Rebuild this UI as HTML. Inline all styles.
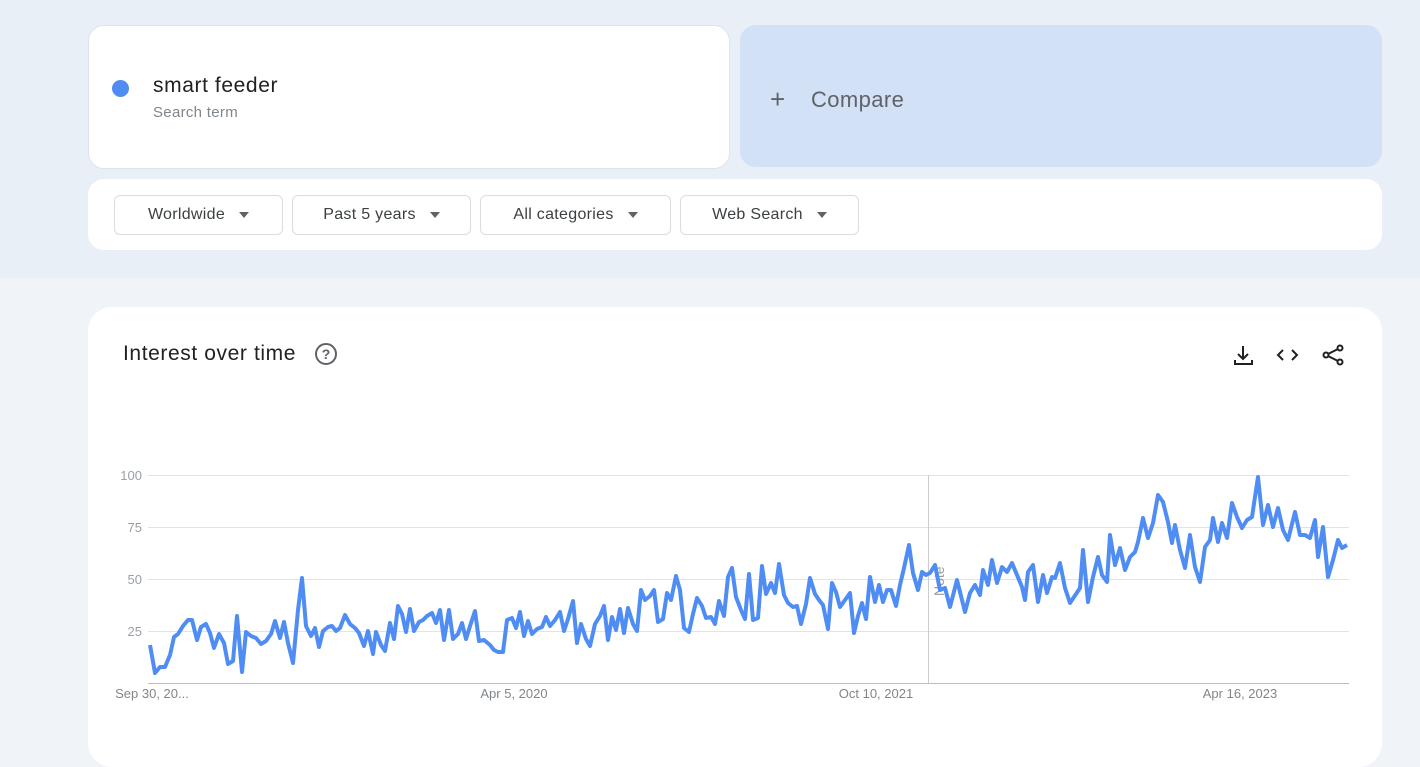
<!DOCTYPE html>
<html><head><meta charset="utf-8"><style>
body{margin:0;width:1420px;height:733px;overflow:hidden;background:#f0f4f9;font-family:"Liberation Sans",Arial,sans-serif;position:relative}
.band{position:absolute;left:0;top:0;width:1420px;height:278px;background:#e8eff7}
.card{position:absolute;background:#fff;border-radius:16px}
.btn{position:absolute;top:195px;height:40px;border:1px solid #dadce0;border-radius:6px;box-sizing:border-box;font-size:16px;letter-spacing:0.3px;color:#3c4043;display:flex;align-items:center;justify-content:center}
.btn span.tri{display:inline-block;width:0;height:0;border-left:5px solid transparent;border-right:5px solid transparent;border-top:6px solid #5f6368;margin-left:14px}
</style></head><body>
<div class="band"></div>
<div class="card" style="left:88px;top:25px;width:642px;height:144px;border:1px solid #dde3ea;box-sizing:border-box"></div>
<div style="position:absolute;left:112px;top:80px;width:17px;height:17px;border-radius:50%;background:#4f8df5"></div>
<div style="position:absolute;left:153px;top:74px;font-size:21px;letter-spacing:0.6px;color:#202124">smart feeder</div>
<div style="position:absolute;left:153px;top:104px;font-size:15px;letter-spacing:0.3px;color:#80868b">Search term</div>
<div class="card" style="left:740px;top:25px;width:642px;height:142px;background:#d2e1f6"></div>
<div style="position:absolute;left:770px;top:84px;font-size:26px;color:#5f6368;font-weight:300">+</div>
<div style="position:absolute;left:811px;top:87px;font-size:22px;letter-spacing:0.4px;color:#5f6368">Compare</div>
<div class="card" style="left:88px;top:179px;width:1294px;height:71px"></div>
<div class="btn" style="left:114px;width:169px">Worldwide<span class="tri"></span></div>
<div class="btn" style="left:292px;width:179px">Past 5 years<span class="tri"></span></div>
<div class="btn" style="left:480px;width:191px">All categories<span class="tri"></span></div>
<div class="btn" style="left:680px;width:179px;top:195px">Web Search<span class="tri"></span></div>
<div class="card" style="left:88px;top:307px;width:1294px;height:460px;border-radius:24px"></div>
<div style="position:absolute;left:123px;top:342px;font-size:21px;letter-spacing:0.6px;color:#202124">Interest over time</div>
<svg style="position:absolute;left:314px;top:342px" width="24" height="24" viewBox="0 0 24 24"><circle cx="12" cy="12" r="10" fill="none" stroke="#5f6368" stroke-width="2"/><text x="12" y="17" font-size="14" text-anchor="middle" fill="#5f6368" font-family="Liberation Sans" font-weight="bold">?</text></svg>
<svg style="position:absolute;left:1230px;top:342px" width="130" height="26" viewBox="0 0 130 26" fill="none" stroke="#202124" stroke-width="2">
<path d="M13 4v13M8 12l5 5 5-5M5 18v4h17v-4"/>
<path d="M53 8l-5 5 5 5M62 8l5 5-5 5"/>
<circle cx="110" cy="6" r="2.5"/><circle cx="96" cy="13" r="2.5"/><circle cx="110" cy="20" r="2.5"/><path d="M98 12l10-5M98 14l10 5"/>
</svg>
<svg style="position:absolute;left:0;top:0" width="1420" height="733">
<g stroke="#e3e3e3" stroke-width="1"><line x1="148" y1="475.5" x2="1349" y2="475.5"/><line x1="148" y1="527.5" x2="1349" y2="527.5"/><line x1="148" y1="579.5" x2="1349" y2="579.5"/><line x1="148" y1="631.5" x2="1349" y2="631.5"/></g>
<line x1="148" y1="683.5" x2="1349" y2="683.5" stroke="#bdbdbd"/>
<line x1="928.5" y1="475" x2="928.5" y2="683" stroke="#ccc"/>
<g font-family="Liberation Sans" font-size="13" fill="#9aa0a6" text-anchor="end"><text x="142" y="480">100</text><text x="142" y="532">75</text><text x="142" y="584">50</text><text x="142" y="636">25</text></g>
<g font-family="Liberation Sans" font-size="13" fill="#80868b" text-anchor="middle"><text x="152" y="698">Sep 30, 20...</text><text x="514" y="698">Apr 5, 2020</text><text x="876" y="698">Oct 10, 2021</text><text x="1240" y="698">Apr 16, 2023</text></g>
<text x="0" y="0" font-family="Liberation Sans" font-size="14" fill="#999" transform="translate(944,596) rotate(-90)">Note</text>
<polyline fill="none" stroke="#4f8df5" stroke-width="4" stroke-linejoin="round" points="150,645 155,673 160,667 165,667 170,655 174,637 178,634 183,626 188,620 192,620 197,640 201,627 206,624 210,633 214,648 219,634 224,643 228,664 233,661 237,616 242,672 246,632 251,636 256,638 261,644 266,641 271,634 275,621 280,638 284,622 288,643 293,663 298,610 302,578 306,626 311,636 315,628 319,647 323,631 328,627 332,626 336,631 340,628 345,615 350,624 355,628 359,633 364,646 368,631 373,654 376,632 381,645 385,651 390,623 394,639 398,606 402,614 406,632 410,609 414,631 419,622 423,620 427,616 432,613 436,623 440,610 444,640 449,610 453,639 458,634 462,623 466,639 471,623 475,611 479,641 484,640 490,645 494,650 498,652 503,652 507,620 512,618 516,628 520,612 524,636 528,621 532,634 537,629 542,627 546,617 550,626 555,620 560,612 564,631 568,619 573,601 577,643 581,624 586,639 590,646 595,624 600,616 604,606 608,640 612,617 616,630 620,609 624,633 628,608 633,624 637,631 641,590 645,600 650,596 654,590 658,622 663,619 667,593 671,600 676,576 680,590 684,628 689,632 693,614 697,598 702,606 706,618 711,617 715,624 719,601 724,616 728,577 732,568 736,597 741,610 745,619 749,574 753,620 758,618 762,566 766,594 771,583 775,593 779,564 784,595 788,603 793,607 797,606 801,624 806,604 810,578 815,594 819,600 823,605 828,629 832,583 836,592 840,607 845,600 850,593 854,633 858,616 862,603 866,619 870,577 875,602 879,585 883,602 887,590 891,590 896,606 900,585 904,568 909,545 913,573 918,590 922,572 926,575 930,573 935,565 940,590 945,588 950,607 957,580 965,612 970,593 975,585 980,595 983,570 988,585 992,560 997,583 1002,567 1007,572 1012,563 1017,575 1022,587 1025,600 1028,572 1033,565 1038,602 1043,575 1047,593 1052,577 1055,578 1060,563 1065,588 1070,603 1080,588 1083,550 1088,602 1093,577 1098,557 1102,575 1107,582 1110,535 1115,565 1120,548 1125,570 1130,557 1135,552 1138,542 1143,518 1148,538 1153,523 1158,495 1163,502 1168,522 1172,543 1175,525 1180,550 1185,568 1190,535 1195,567 1200,582 1205,547 1210,540 1213,518 1218,542 1222,523 1227,538 1232,503 1237,517 1242,528 1247,520 1252,517 1258,477 1263,525 1268,505 1273,527 1278,508 1283,530 1288,540 1295,512 1300,535 1305,535 1310,538 1315,520 1318,557 1323,527 1328,577 1333,560 1338,540 1342,548 1347,545"/>
</svg>
</body></html>
